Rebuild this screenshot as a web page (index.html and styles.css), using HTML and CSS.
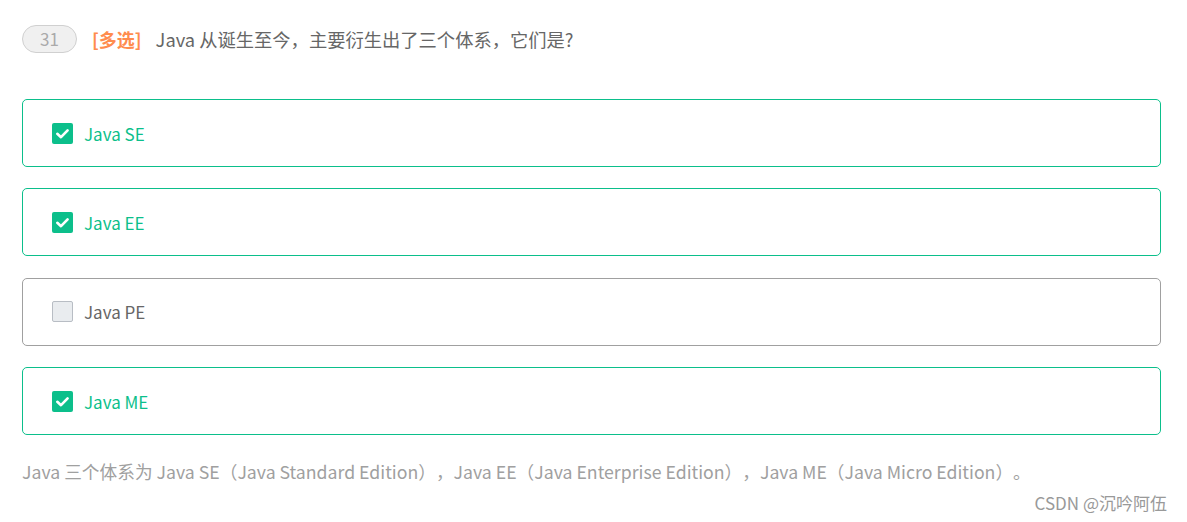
FILE: index.html
```html
<!DOCTYPE html>
<html lang="zh">
<head>
<meta charset="utf-8">
<link rel="stylesheet" href="styles.css">
</head>
<body>
<div class="page">
  <div class="question">
    <span class="num">31</span>
    <span class="type">[多选]</span>
    <span class="title">Java 从诞生至今，主要衍生出了三个体系，它们是?</span>
  </div>
  <div class="options">
    <div class="option checked">
      <span class="box"><svg viewBox="0 0 21 21" width="21" height="21"><path d="M5.3 10.8 L9 14.2 L15.6 7.4" fill="none" stroke="#fff" stroke-width="2.6" stroke-linecap="round" stroke-linejoin="round"/></svg></span>
      <span class="label">Java SE</span>
    </div>
    <div class="option checked">
      <span class="box"><svg viewBox="0 0 21 21" width="21" height="21"><path d="M5.3 10.8 L9 14.2 L15.6 7.4" fill="none" stroke="#fff" stroke-width="2.6" stroke-linecap="round" stroke-linejoin="round"/></svg></span>
      <span class="label">Java EE</span>
    </div>
    <div class="option">
      <span class="box"></span>
      <span class="label">Java PE</span>
    </div>
    <div class="option checked">
      <span class="box"><svg viewBox="0 0 21 21" width="21" height="21"><path d="M5.3 10.8 L9 14.2 L15.6 7.4" fill="none" stroke="#fff" stroke-width="2.6" stroke-linecap="round" stroke-linejoin="round"/></svg></span>
      <span class="label">Java ME</span>
    </div>
  </div>
  <div class="explain">Java 三个体系为 Java SE（Java Standard Edition），Java EE（Java Enterprise Edition），Java ME（Java Micro Edition）。</div>
  <div class="mark">CSDN @沉吟阿伍</div>
</div>
</body>
</html>
```

FILE: styles.css
```css
html, body {
  margin: 0;
  padding: 0;
  background: #fff;
}
body {
  font-family: "Noto Sans CJK SC", "Noto Sans", sans-serif;
  width: 1187px;
  height: 522px;
  overflow: hidden;
  text-spacing-trim: space-all;
}
.page {
  padding: 25px 26px 0 22px;
}
.question {
  display: flex;
  align-items: center;
  height: 28px;
  line-height: 26px;
}
.num {
  box-sizing: border-box;
  width: 55px;
  height: 28px;
  border: 1px solid #d0d0d0;
  border-radius: 14px;
  background: #f0f0f0;
  color: #aaa;
  font-size: 17px;
  display: flex;
  align-items: center;
  justify-content: center;
}
.type {
  margin-left: 15px;
  color: #ff8c4e;
  font-weight: bold;
  font-size: 18px;
}
.title {
  margin-left: 14px;
  color: #666;
  font-size: 18.3px;
}
.options {
  margin-top: 46px;
  display: flex;
  flex-direction: column;
  gap: 21.4px;
}
.option {
  box-sizing: border-box;
  height: 68px;
  border: 1px solid #a0a0a0;
  border-radius: 5px;
  display: flex;
  align-items: center;
  padding-left: 29px;
}
.option.checked {
  border-color: #0bbf8b;
}
.box {
  box-sizing: border-box;
  width: 21px;
  height: 21px;
  border-radius: 2px;
  border: 1px solid #b8bdc4;
  background: #e9ecef;
  display: flex;
}
.option.checked .box {
  border: none;
  background: #0cbf8b;
}
.label {
  margin-left: 11px;
  font-size: 17px;
  color: #666;
}
.option.checked .label {
  color: #0cbf8b;
}
.explain {
  margin-top: 23px;
  font-size: 17.7px;
  color: #a0a0a0;
  white-space: nowrap;
}
.mark {
  margin-top: 6px;
  text-align: right;
  margin-right: -6px;
  font-size: 17px;
  color: #999;
}
```
